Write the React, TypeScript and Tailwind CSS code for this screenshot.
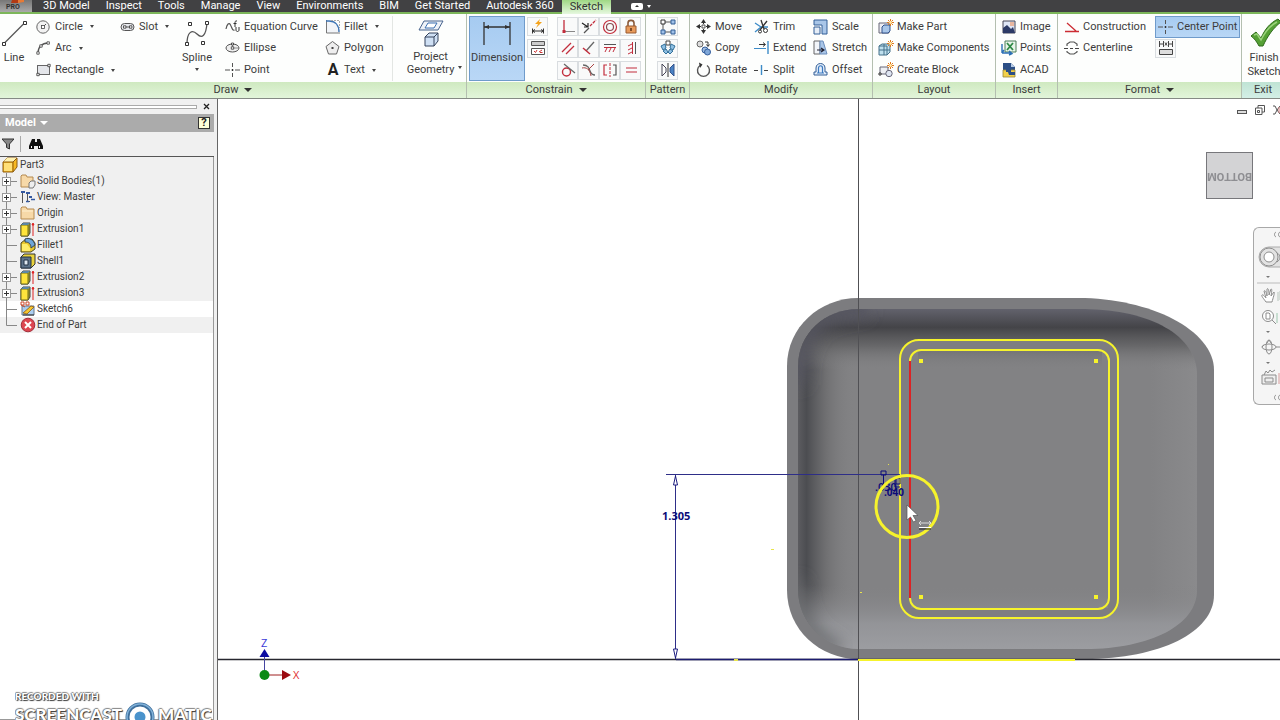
import { useState, type ReactNode } from "react";

const tabs = ["3D Model", "Inspect", "Tools", "Manage", "View", "Environments", "BIM", "Get Started", "Autodesk 360", "Sketch"];

const icons: Record<string, ReactNode> = {
  circle: (
    <>
      <circle cx="7" cy="8" r="6.2" fill="#f2f2f2" stroke="#666" />
      <path d="M7 8l3-3" stroke="#555" />
      <rect x="5.5" y="6.5" width="3" height="3" fill="#fff" stroke="#444" strokeWidth=".8" />
    </>
  ),
  arc: (
    <>
      <path d="M2 13C2 7 6 3 12 3" stroke="#555" strokeWidth="1.3" />
      <path d="M.8 11.8h2.4v2.4H.8zM3.8 4.8h2.4v2.4H3.8zM11 1.8h2.4v2.4H11z" fill="#fff" stroke="#444" strokeWidth=".8" />
    </>
  ),
  rectangle: (
    <>
      <rect x="1.5" y="3.5" width="12" height="9" fill="#e4e6ea" stroke="#666" />
      <path d="M.8 11.3h2.4v2.4H.8zM11.8 2.3h2.4v2.4h-2.4z" fill="#fff" stroke="#333" strokeWidth=".8" />
    </>
  ),
  slot: (
    <>
      <rect x="1" y="4.5" width="13" height="7" rx="3.5" fill="#e6e8ec" stroke="#555" />
      <path d="M4 8h7" stroke="#555" />
      <path d="M3.5 6.8h2.4v2.4H3.5zM9.5 6.8h2.4v2.4H9.5z" fill="#fff" stroke="#333" strokeWidth=".8" />
    </>
  ),
  equation: (
    <>
      <path d="M1 10c1-5 3-7 4.5-4s2 6 4 5" stroke="#555" strokeWidth="1.2" />
      <path d="M12 2c-2-.5-2 1-2 2v4M8.5 4.5h3M11 8v3c0 2 3 2 3 0V8" stroke="#333" />
    </>
  ),
  ellipse: (
    <>
      <ellipse cx="7.5" cy="8" rx="6.5" ry="4" fill="#eee" stroke="#555" />
      <path d="M7.5 4v4h6" stroke="#777" strokeWidth=".8" />
      <path d="M6.3 6.8h2.4v2.4H6.3zM6.5 3h2v2h-2z" fill="#fff" stroke="#333" strokeWidth=".8" />
    </>
  ),
  point: (
    <>
      <path d="M0 8h5M10 8h5M7.5 1v4M7.5 11v4" stroke="#555" />
      <path d="M7 7.5h1v1H7z" stroke="#333" />
    </>
  ),
  fillet: (
    <>
      <path d="M1 2h4c5 0 9 4 9 9v3H1z" fill="#f1f4f8" />
      <path d="M1.5 1v13H15" stroke="#777" />
      <path d="M1 2h3c6 0 10 4 10 11" stroke="#3c74b4" strokeWidth="1.4" />
      <path d="M6 1.5h8.5V9" stroke="#aaa" strokeDasharray="2 1" />
    </>
  ),
  polygon: (
    <>
      <path d="M7.5 1.5l6.5 5-2.5 7.500h-8L1 6.5z" fill="#eee" stroke="#666" />
      <path d="M6.500 7h2v2h-2z" fill="#444" />
    </>
  ),
  move: (
    <>
      <path d="M7.5 1v4M7.5 10v4M1 7.5h4M10 7.5h4" stroke="#333" />
      <path d="M5 4l2.5-4L10 4zM5 11l2.5 4 2.5-4zM4 5L0 7.500 4 10zM11 5l4 2.500L11 10z" fill="#333" />
      <path d="M6 6h3v3H6z" fill="#fff" stroke="#555" />
    </>
  ),
  copy: (
    <>
      <circle cx="4" cy="4" r="3" fill="#ddd" stroke="#666" />
      <circle cx="9" cy="10" r="3" fill="#9dbbe0" stroke="#345e9c" />
      <circle cx="11.5" cy="12" r="3" fill="#7fa7d8" stroke="#345e9c" />
      <path d="M9 2h3v4M10.5 4.5l1.5 2 1.5-2" stroke="#333" />
    </>
  ),
  rotate: (
    <>
      <path d="M4 3.5a6 6 0 1 0 7 0" stroke="#555" strokeWidth="1.4" />
      <path d="M3 .5l3.5 2L4 6z" fill="#333" />
    </>
  ),
  trim: (
    <>
      <path d="M1 4l6 4-6 5M7 8h7" stroke="#3c8bc8" strokeWidth="1.3" />
      <path d="M7 1l3 9M13 2L6 11" stroke="#333" strokeWidth="1.3" />
      <circle cx="11.5" cy="11.5" r="2" stroke="#333" />
      <circle cx="6" cy="12.5" r="1.5" stroke="#333" />
    </>
  ),
  extend: (
    <>
      <path d="M0 8.5h12" stroke="#3c8bc8" />
      <path d="M5 4.500h6M9 2.500l2.500 2L9 6.500" stroke="#333" />
      <path d="M14 1v13" stroke="#3c8bc8" strokeWidth="1.4" />
    </>
  ),
  split: (
    <>
      <path d="M0 8.5h5M10 8.5h5" stroke="#444" strokeDasharray="4 1" />
      <path d="M7.5 3v10" stroke="#3c8bc8" strokeWidth="1.4" />
    </>
  ),
  scale: (
    <>
      <path d="M1 1h13v14H9V6H1z" fill="#a9c6e8" stroke="#335f96" />
      <path d="M1 8h6v7H1z" fill="#e5edf7" stroke="#335f96" />
    </>
  ),
  stretch: (
    <>
      <path d="M1 1h6v13H1z" fill="#f2f5f9" stroke="#666" />
      <path d="M7 1h3l4 13H7z" fill="#a9c6e8" stroke="#6b8dbb" />
      <path d="M4 10h6M8 8l3 2-3 2" stroke="#223" strokeWidth="1.2" />
    </>
  ),
  offset: (
    <>
      <path d="M1 13h13v-3h-2V6c0-6-9-6-9 0v4H1z" fill="#e4eefa" stroke="#335f96" />
      <path d="M4 11h7M5.5 11V6c0-3 4-3 4 0v5" stroke="#3c7bc0" strokeWidth="1.2" />
    </>
  ),
  makePart: (
    <>
      <path d="M1 4h10v10H1z" fill="#ececf2" stroke="#667" />
      <path d="M4 8l2-2h6v6l-2 2H4z" fill="#a9c6e8" stroke="#33528c" />
      <path d="M12.5 0v7M9 3.5h7M10 1l5 5M15 1l-5 5" stroke="#e07a1c" />
      <circle cx="12.5" cy="3.5" r="1.4" fill="#ffe9a8" />
    </>
  ),
  makeComponents: (
    <>
      <path d="M1 6l3-2h8v8l-3 3H1z" fill="#bfe0ee" stroke="#44708a" />
      <path d="M1 10h11M6 4v11M1 6h8v9" stroke="#44708a" />
      <path d="M12.5 0v7M9 3.5h7M10 1l5 5M15 1l-5 5" stroke="#e07a1c" />
      <circle cx="12.5" cy="3.5" r="1.4" fill="#ffe9a8" />
    </>
  ),
  createBlock: (
    <>
      <path d="M2 5h8v7H2z" fill="#eef0f4" stroke="#667" />
      <circle cx="11" cy="11.5" r="3.2" fill="#dfe6f2" stroke="#667" />
      <path d="M1 11h2v2H1z" fill="#fff" stroke="#333" />
      <path d="M12.5 0v7M9 3.5h7M10 1l5 5M15 1l-5 5" stroke="#e07a1c" />
      <circle cx="12.5" cy="3.5" r="1.4" fill="#ffe9a8" />
    </>
  ),
  image: (
    <>
      <path d="M2 2h12v12H2z" fill="#dfe6f6" stroke="#445" />
      <path d="M2 14V9l4-3 4 4 2-2 2 6z" fill="#2c3a66" />
      <path d="M9 3h4v4H9z" fill="#e9b7a0" />
    </>
  ),
  points: (
    <>
      <path d="M4 1h11v11H4z" fill="#e9f5ea" stroke="#4a7c59" />
      <path d="M6 3l6 7M12 3l-6 7" stroke="#2f8a45" strokeWidth="1.8" />
      <path d="M1 4v9M1 13h9M3 10l-2 3M8 11l3 2.5L8 15" stroke="#2b6fb5" strokeWidth="1.4" />
    </>
  ),
  acad: (
    <>
      <path d="M2 1h8l4 4v4H2z" fill="#2c4f86" />
      <path d="M10 1l4 4h-4z" fill="#b7cbe6" />
      <path d="M2 8h12v7H2z" fill="#f3d04a" stroke="#94863a" strokeWidth=".8" />
      <path d="M5 5h5v5h4v3H8l-1-3H5z" fill="#2c4f86" />
    </>
  ),
  construction: <path d="M1 12.500h14M3 4l9 8" stroke="#cc2c34" strokeWidth="1.3" />,
  centerline: (
    <>
      <path d="M0 8.5h4M6 8.5h3M11 8.500h4" stroke="#444" />
      <path d="M3 6V4l3-2h4l3 2v2M3 11v1l3 2h4l3-2v-1" stroke="#555" strokeWidth="1.2" />
    </>
  ),
  autoDim: (
    <>
      <path d="M10 0L5 5h3l-2 4 6-6H9z" fill="#f4a31c" />
      <path d="M2 12h12M2.5 9.5v5M13.5 9.5v5M5 10.500L2.500 12 5 13.500M11 10.500l2.500 1.500-2.500 1.500" stroke="#333" />
    </>
  ),
  showDim: (
    <>
      <path d="M1.500 1.500h13v4h-13z" fill="#ccc" stroke="#555" />
      <path d="M1.500 8.500h13v6h-13z" fill="#fff" stroke="#555" />
      <path d="M4 11l1.500 1.500L7 10M9 12l3-2M10 12.500h2.500" stroke="#c33" />
    </>
  ),
  coincident: (
    <>
      <path d="M4 1v11" stroke="#c22d3c" strokeWidth="1.3" />
      <path d="M4 12.5h11" stroke="#888" />
      <path d="M2.500 11h3v3h-3z" fill="#c22d3c" />
    </>
  ),
  collinear: (
    <>
      <path d="M9 7l6-6" stroke="#c22d3c" strokeWidth="1.3" strokeDasharray="3 1" />
      <path d="M3 14l5-5" stroke="#555" strokeWidth="1.2" />
      <path d="M1 4l6 4M7 4v4H3" stroke="#222" strokeWidth="1.2" />
    </>
  ),
  concentric: (
    <>
      <circle cx="8" cy="8" r="6.5" stroke="#c22d3c" strokeWidth="1.2" />
      <circle cx="8" cy="8" r="3.5" stroke="#8a4a50" strokeWidth="1.2" />
    </>
  ),
  lock: (
    <>
      <path d="M5 7V4c0-3.5 6-3.5 6 0v3" stroke="#8a5a3a" strokeWidth="1.6" />
      <path d="M3 7h10v7H3z" fill="#e79a5b" stroke="#9a5a30" />
      <path d="M8 9v3" stroke="#5c3217" strokeWidth="1.5" />
    </>
  ),
  parallel: (
    <>
      <path d="M2 12L11 3" stroke="#c22d3c" strokeWidth="1.3" />
      <path d="M6 14l8-8" stroke="#c22d3c" strokeWidth="1.3" />
    </>
  ),
  perpendicular: (
    <>
      <path d="M5 11l8-9" stroke="#666" strokeWidth="1.3" />
      <path d="M2 8l7 6" stroke="#c22d3c" strokeWidth="1.5" />
    </>
  ),
  horizontal: (
    <>
      <path d="M2 4.5h12" stroke="#555" />
      <path d="M2 7.5h12M5 8l-2 4M9 8l-2 4M13 8l-2 4" stroke="#c22d3c" />
    </>
  ),
  vertical: (
    <>
      <path d="M12.5 2v12" stroke="#555" />
      <path d="M9.5 2v12M9 4L5 6M9 8l-4 2M9 12l-4 2" stroke="#c22d3c" />
    </>
  ),
  tangent: (
    <>
      <circle cx="6.500" cy="10" r="4" stroke="#c22d3c" strokeWidth="1.4" />
      <path d="M4 2l11 9" stroke="#666" strokeWidth="1.2" />
    </>
  ),
  smooth: (
    <>
      <path d="M2 3c5 0 6 3 7 6s3 4 5 4" stroke="#666" strokeWidth="1.4" />
      <path d="M1 6c4-1 8 1 9 8M13 2L7 8" stroke="#a44" />
    </>
  ),
  symmetric: (
    <>
      <path d="M5 3H2v10h3" stroke="#c22d3c" strokeWidth="1.2" />
      <path d="M11 3h3v10h-3" stroke="#555" strokeWidth="1.2" />
      <path d="M8 1v14" stroke="#c22d3c" strokeDasharray="3 1" />
    </>
  ),
  equal: <path d="M3 6h11M3 10h11" stroke="#c22d3c" strokeWidth="1.2" />,
  patternRect: (
    <>
      <path d="M3 3h10M3 3v10h10" stroke="#555" />
      <path d="M1 1h4v4H1z" fill="#fff" stroke="#333" />
      <path d="M11 1h4v4h-4zM1 11h4v4H1zM11 11h4v4h-4z" fill="#9fc0e8" stroke="#335f96" />
    </>
  ),
  patternCirc: (
    <>
      <path d="M6 1h4v4H6z" fill="#fff" stroke="#444" />
      <path d="M1 6l4-2 1 4-3 2zM11 4l4 2-2 4-3-2zM3 11l3-2 2 3-2 2zM10 9l3 2-3 3-2-2z" fill="#8fc0e4" stroke="#33709a" />
    </>
  ),
  mirror: (
    <>
      <path d="M2 2l4 4v4l-4 4z" fill="#fff" stroke="#445" />
      <path d="M14 2l-4 4v4l4 4z" fill="#4a83c4" stroke="#33528c" />
      <path d="M8 1v14" stroke="#333" />
    </>
  ),
  driven: (
    <>
      <path d="M1.500 1v6M5.500 1v6M2 4h3M10.500 1v6M14.500 1v6M11 4h3M7 2.500l2 3M9 2.500l-2 3" stroke="#444" />
      <path d="M1.500 9.500h13v5h-13z" fill="#ddd" stroke="#444" />
    </>
  ),
  cube: (
    <>
      <path d="M1 5l4-4h10v9l-4 5H1z" fill="#f7b921" stroke="#8c5b11" />
      <path d="M1 5l4-4h10l-4 4z" fill="#fff2b0" />
      <path d="M2 6h8v8H2z" fill="#ffe078" />
      <path d="M1 5h10v10M11 5l4-4" stroke="#8c5b11" />
    </>
  ),
  bodies: (
    <>
      <path d="M1 3l1-1h4l1 2h6v10H1z" fill="#f7d9a8" stroke="#b58a50" />
      <path d="M9 10l2-2h4v4l-2 3H9z" fill="#eee" stroke="#777" />
    </>
  ),
  folder: (
    <>
      <path d="M1 3l1-1h4l1 2h7v10H1z" fill="#f7d9a8" stroke="#b58a50" />
      <path d="M2 6h11" stroke="#fff0d0" />
    </>
  ),
  viewMaster: (
    <>
      <path d="M2.500 2v12M7.500 5v8M7 12.500h3" stroke="#555" />
      <path d="M1 2h4v2H1zM6 3h4v2H6zM9 7h3v2H9z" fill="#3458a0" />
      <path d="M6 12.500h3M11 10.500h4" stroke="#3458a0" strokeWidth="1.5" />
    </>
  ),
  extrusion: (
    <>
      <path d="M1 4l2-2h7v10l-2 3H1z" fill="#a9a227" stroke="#444" />
      <path d="M1 4h7v11H1z" fill="#ffe43c" stroke="#6f6a1c" />
      <path d="M3 2h7L8 4H1z" fill="#5b87a6" />
      <path d="M13 15V3M12 4l1-2 1 2z" fill="#d22" stroke="#d22" />
    </>
  ),
  filletPart: (
    <>
      <path d="M1 6l5-4h6l3 4v6l-4 3H1z" fill="#e9c82c" stroke="#4c4a20" />
      <path d="M5 2c4-2 9 1 10 6l-4 3c0-4-2-6-6-6z" fill="#6ea6d8" stroke="#345" />
      <path d="M2 7h5l3 4v3H2z" fill="#ffee6a" />
    </>
  ),
  shell: (
    <>
      <path d="M1 4l3-3h11v10l-4 4H1z" fill="#e9d23c" stroke="#333" />
      <path d="M1 4h10v11H1z" fill="#5d7389" stroke="#234" />
      <path d="M4 7h4v5H4z" fill="#dfe8f0" stroke="#234" />
    </>
  ),
  sketchDoc: (
    <>
      <path d="M2 5h12v9H2z" fill="#a9cdf0" stroke="#678" />
      <path d="M3 12l8-7 3 1-7 7z" fill="#f6c62e" stroke="#8c5b11" strokeWidth=".8" />
      <path d="M1 1h3v3H1zM6 1h3v3H6zM1 4l4 2" fill="#fff" stroke="#cc4a2a" />
      <path d="M3 14h11" stroke="#333" />
    </>
  ),
  end: (
    <>
      <circle cx="8" cy="8" r="6.8" fill="#dc4650" stroke="#a3303c" />
      <path d="M5 5l6 6M11 5l-6 6" stroke="#fff" strokeWidth="2" />
    </>
  ),
};

function Icon({ name }: { name: string }) {
  return (
    <svg className="size-4 shrink-0" viewBox="0 0 16 16" fill="none">
      {icons[name]}
    </svg>
  );
}

function Caret() {
  return <span className="border-x-2 border-t-3 border-x-transparent border-t-[#444]" />;
}

function Tool({ icon, label, menu }: { icon: string; label: string; menu?: boolean }) {
  return (
    <button className="flex items-center gap-[3px] whitespace-nowrap px-1 text-left">
      <Icon name={icon} />
      {label}
      {menu && <span className="ml-1 flex"><Caret /></span>}
    </button>
  );
}

function SmallTool({ icon }: { icon: string }) {
  return (
    <button aria-label={icon} className="flex h-[19px] w-[21px] items-center justify-center self-center border border-[#d9dde0] bg-[#f9fafa]">
      <Icon name={icon} />
    </button>
  );
}

function Panel({ title, menu, className, children }: { title: string; menu?: boolean; className?: string; children: ReactNode }) {
  return (
    <section className={`flex shrink-0 flex-col border-r border-[#b4bfb0] ${className ?? ""}`}>
      <div className="flex h-[68px] bg-[#fdfefd] pt-0.5 pb-px">{children}</div>
      <div className="flex h-4 items-center justify-center gap-1.5 bg-linear-to-b from-[#cfe9c0] to-[#e2f5da]">
        {title}
        {menu && <span className="border-x-4 border-t-4 border-x-transparent border-t-[#333]" />}
      </div>
    </section>
  );
}

const column = "grid grid-rows-3";

function Ribbon() {
  return (
    <div className="flex shrink-0 overflow-hidden border-b border-[#858a85] bg-[#fdfefd]">
      <Panel title="Draw" menu className="w-[467px]">
        <button className="flex w-8 flex-col items-center gap-0.5 pt-1 pr-1">
          <svg className="h-7 w-7" viewBox="0 0 28 28" fill="none">
            <path d="M4 23.500L25 2.500" stroke="#555" strokeWidth="1.2" />
            <path d="M2.500 22.500h3v3h-3zM23.500 1.500h3v3h-3z" fill="#fff" stroke="#333" />
          </svg>
          Line
        </button>
        <div className={`${column} w-[84px]`}>
          <Tool icon="circle" label="Circle" menu />
          <Tool icon="arc" label="Arc" menu />
          <Tool icon="rectangle" label="Rectangle" menu />
        </div>
        <div className={`${column} w-[57px]`}>
          <Tool icon="slot" label="Slot" menu />
        </div>
        <button className="flex w-12 flex-col items-center gap-0.5 pt-1">
          <svg className="h-7 w-7 shrink-0" viewBox="0 0 28 28" fill="none">
            <path d="M4 24C4 12 9 9 14 14s9 2 10-11" stroke="#555" strokeWidth="1.3" />
            <path d="M2.500 22.500h3v3h-3zM5.500 2.500h3v3h-3zM18.500 21.500h3v3h-3zM22.500 1.500h3v3h-3z" fill="#fff" stroke="#333" />
          </svg>
          Spline
          <Caret />
        </button>
        <div className={`${column} w-[100px]`}>
          <Tool icon="equation" label="Equation Curve" />
          <Tool icon="ellipse" label="Ellipse" />
          <Tool icon="point" label="Point" />
        </div>
        <div className={`${column} w-[72px] border-r border-[#e3e6e3]`}>
          <Tool icon="fillet" label="Fillet" menu />
          <Tool icon="polygon" label="Polygon" />
          <button className="flex items-center gap-[3px] px-1">
            <span className="w-4 text-center text-base leading-4 font-bold text-[#222]">A</span>
            Text
            <span className="ml-1 flex"><Caret /></span>
          </button>
        </div>
        <button className="relative flex flex-1 flex-col items-center pt-1 pl-0.5 leading-[13px]">
          <svg className="-mb-0.5 h-8 w-8 shrink-0" viewBox="0 0 32 32" fill="none">
            <path d="M9 1h19l-5 9H4z" fill="#eef2f8" stroke="#46628c" />
            <path d="M13 3h9l-3 5h-9z" fill="#fff" stroke="#3a6fb0" />
            <path d="M10 17l4-4h9v8l-4 5h-9z" fill="#cfe0f4" stroke="#34435c" />
            <path d="M10 17h9v9M19 17l4-4" stroke="#34435c" />
          </svg>
          <span>Project</span>
          <span>Geometry</span>
          <span className="absolute right-1 bottom-3 flex"><Caret /></span>
        </button>
      </Panel>

      <Panel title="Constrain" menu className="w-[179px]">
        <button className="ml-0.5 flex w-14 flex-col items-center gap-0.5 border border-[#6f9bcb] bg-linear-to-b from-[#a6cbf1] to-[#b9d7f6] pt-[3px]">
          <svg className="h-7 w-8" viewBox="0 0 32 28" fill="none">
            <path d="M3 2v23M29 2v23M3 7h26" stroke="#333" strokeWidth="1.3" />
            <path d="M3 7l5-2v4zM29 7l-5-2v4z" fill="#333" />
          </svg>
          Dimension
        </button>
        <div className={`${column} ml-0.5`}>
          <SmallTool icon="autoDim" />
          <SmallTool icon="showDim" />
        </div>
        <div className="ml-[9px] grid grid-cols-4 grid-rows-3">
          <SmallTool icon="coincident" />
          <SmallTool icon="collinear" />
          <SmallTool icon="concentric" />
          <SmallTool icon="lock" />
          <SmallTool icon="parallel" />
          <SmallTool icon="perpendicular" />
          <SmallTool icon="horizontal" />
          <SmallTool icon="vertical" />
          <SmallTool icon="tangent" />
          <SmallTool icon="smooth" />
          <SmallTool icon="symmetric" />
          <SmallTool icon="equal" />
        </div>
      </Panel>

      <Panel title="Pattern" className="w-11">
        <div className={`${column} mx-auto`}>
          <SmallTool icon="patternRect" />
          <SmallTool icon="patternCirc" />
          <SmallTool icon="mirror" />
        </div>
      </Panel>

      <Panel title="Modify" className="w-[183px]">
        <div className={`${column} ml-0.5 w-[58px]`}>
          <Tool icon="move" label="Move" />
          <Tool icon="copy" label="Copy" />
          <Tool icon="rotate" label="Rotate" />
        </div>
        <div className={`${column} w-[59px]`}>
          <Tool icon="trim" label="Trim" />
          <Tool icon="extend" label="Extend" />
          <Tool icon="split" label="Split" />
        </div>
        <div className={column}>
          <Tool icon="scale" label="Scale" />
          <Tool icon="stretch" label="Stretch" />
          <Tool icon="offset" label="Offset" />
        </div>
      </Panel>

      <Panel title="Layout" className="w-[123px]">
        <div className={`${column} ml-px`}>
          <Tool icon="makePart" label="Make Part" />
          <Tool icon="makeComponents" label="Make Components" />
          <Tool icon="createBlock" label="Create Block" />
        </div>
      </Panel>

      <Panel title="Insert" className="w-[62px]">
        <div className={`${column} ml-px`}>
          <Tool icon="image" label="Image" />
          <Tool icon="points" label="Points" />
          <Tool icon="acad" label="ACAD" />
        </div>
      </Panel>

      <Panel title="Format" menu className="w-[184px]">
        <div className={`${column} ml-0.5 w-[94px]`}>
          <Tool icon="construction" label="Construction" />
          <Tool icon="centerline" label="Centerline" />
        </div>
        <div className={column}>
          <button className="ml-px flex items-center gap-[3px] border border-[#6f9bcb] bg-linear-to-b from-[#a6cbf1] to-[#b9d7f6] px-0.5 whitespace-nowrap">
            <Icon name="point" />
            Center Point
          </button>
          <div className="ml-px flex">
            <SmallTool icon="driven" />
          </div>
        </div>
      </Panel>

      <section className="flex min-w-0 flex-1 flex-col overflow-hidden">
        <button className="flex h-[68px] w-11 flex-col items-center gap-px bg-[#fdfefd] pt-1 leading-[13px]">
          <svg className="h-8 w-9 shrink-0" viewBox="0 0 36 32" fill="none">
            <path d="M5 18l5-4 5 6C19 11 24 5 32 1l3 3C27 10 21 19 17 28h-4C11 24 8 20 5 18z" fill="#55a035" stroke="#2f6a1c" />
            <path d="M8 17l3-1 4 6C20 12 25 7 31 4" stroke="#9bd27c" strokeWidth="1.5" />
          </svg>
          <span>Finish</span>
          <span>Sketch</span>
        </button>
        <div className="flex h-4 items-center bg-linear-to-b from-[#bfe3d4] to-[#d3efe6] pl-3">Exit</div>
      </section>
    </div>
  );
}

function TabBar() {
  const [active, setActive] = useState("Sketch");
  return (
    <nav className="flex h-3.5 shrink-0 items-stretch border-b-2 border-[#7cb65a] bg-[#414143] text-white">
      <div className="relative mr-[3px] flex w-8 items-end overflow-hidden bg-linear-to-b from-[#777] to-[#aaa] pl-[6px] text-[7px] leading-[9px] font-bold text-[#333]">
        <svg className="absolute top-0 left-2.5 h-1 w-4" viewBox="0 0 16 4">
          <path d="M2 0h6v3H1z" fill="#b23a14" />
          <path d="M8 0h6v2l-6 1z" fill="#e77a35" />
        </svg>
        PRO
      </div>
      {tabs.map((tab) => (
        <button
          key={tab}
          onClick={() => setActive(tab)}
          className={
            tab === active
              ? "-mb-0.5 bg-linear-to-b from-[#9fd884] to-[#e6f8df] px-2 leading-3 text-[#333]"
              : "px-2 leading-3"
          }
        >
          {tab}
        </button>
      ))}
      <button aria-label="Ribbon display" className="ml-5 flex items-center gap-1">
        <span className="flex h-[7px] w-3 items-center justify-center rounded-xs bg-white">
          <span className="border-x-2 border-b-2 border-x-transparent border-b-[#333]" />
        </span>
        <span className="border-x-2 border-t-3 border-x-transparent border-t-white" />
      </button>
    </nav>
  );
}

const nodes = [
  { icon: "bodies", label: "Solid Bodies(1)", expandable: true },
  { icon: "viewMaster", label: "View: Master", expandable: true },
  { icon: "folder", label: "Origin", expandable: true },
  { icon: "extrusion", label: "Extrusion1", expandable: true },
  { icon: "filletPart", label: "Fillet1" },
  { icon: "shell", label: "Shell1" },
  { icon: "extrusion", label: "Extrusion2", expandable: true },
  { icon: "extrusion", label: "Extrusion3", expandable: true },
  { icon: "sketchDoc", label: "Sketch6", selected: true },
  { icon: "end", label: "End of Part" },
];

function ModelTree() {
  return (
    <aside className="flex w-[218px] shrink-0 flex-col border-r border-[#666] bg-[#f0f0f0] pr-[3px]">
      <div className="flex h-[15px] items-center gap-1 pr-0.5">
        <span className="h-[4px] flex-1 border-y border-r border-[#aaa] bg-white" />
        <button aria-label="Close" className="flex p-0.5">
          <svg className="size-[7px]" viewBox="0 0 7 7">
            <path d="M1 1l5 5M6 1L1 6" stroke="#222" strokeWidth="1.3" />
          </svg>
        </button>
      </div>
      <div className="flex h-[18px] items-center bg-[#ababab] pr-1 pl-[5px] text-[11px] font-bold text-white">
        Model
        <span className="ml-1 border-x-4 border-t-4 border-x-transparent border-t-white" />
        <button className="ml-auto flex h-3 w-3 items-center justify-center border border-[#333] bg-[#ffffd8] text-[#222]">?</button>
      </div>
      <div className="flex h-[25px] items-center border-b border-[#555] pl-[2px]">
        <button aria-label="Filter">
          <svg className="size-3" viewBox="0 0 12 12">
            <path d="M0 1h12L7.500 6v5l-3-1.500V6z" fill="#888" stroke="#333" />
          </svg>
        </button>
        <span className="mx-[6px] h-4 border-l border-[#aaa]" />
        <button aria-label="Find" className="ml-0.5">
          <svg className="h-3.5 w-3.5" viewBox="0 0 14 14">
            <path d="M3 2h3v3h2V2h3l3 7v3H9V9H5v3H0V9z" fill="#111" />
            <path d="M2 9h1v2H2zM10 9h1v2h-1z" fill="#fff" />
          </svg>
        </button>
      </div>
      <div className="flex-1 border-r border-b border-[#999] bg-white text-[10px]">
        <div className="flex h-4 items-center gap-0.5 bg-[#f0f0f0] pl-[2px]">
          <Icon name="cube" />
          Part3
        </div>
        <ul>
          {nodes.map((node, i) => (
            <li key={node.label} className={`flex h-4 items-center ${node.selected ? "bg-white" : "bg-[#f0f0f0]"}`}>
              <svg className="h-4 w-5 shrink-0" viewBox="0 0 20 16" fill="none">
                <path d={i === nodes.length - 1 ? "M6.5 0v8.5H17" : "M6.5 0v16M6.5 8.5H17"} stroke="#888" />
                {node.expandable && (
                  <>
                    <rect x="2.5" y="4.5" width="8" height="8" fill="#fff" stroke="#999" />
                    <path d="M4 8.5h5M6.5 6v5" stroke="#333" />
                  </>
                )}
              </svg>
              <button className="flex items-center gap-px">
                <Icon name={node.icon} />
                {node.label}
              </button>
            </li>
          ))}
        </ul>
      </div>
    </aside>
  );
}

const inner = "M858 309H1085C1150 310 1197 335 1197 375V590C1197 625 1150 649 1085 649H858C825 649 798 622 798 590V366C798 334 825 309 858 309Z";

function Drawing() {
  return (
    <svg className="block h-full w-full" viewBox="218 99 1062 621" preserveAspectRatio="xMidYMid slice" fill="none">
      <defs>
        <linearGradient id="top" x1="0" y1="309" x2="0" y2="370" gradientUnits="userSpaceOnUse">
          <stop offset="0" stopColor="#62626c" />
          <stop offset=".3" stopColor="#444448" />
          <stop offset=".6" stopColor="#606062" stopOpacity=".8" />
          <stop offset="1" stopColor="#828284" stopOpacity="0" />
        </linearGradient>
        <linearGradient id="left" x1="798" y1="0" x2="855" y2="0" gradientUnits="userSpaceOnUse">
          <stop offset="0" stopColor="#5c5c60" />
          <stop offset=".15" stopColor="#4c4d51" />
          <stop offset=".5" stopColor="#6c6c6e" stopOpacity=".8" />
          <stop offset="1" stopColor="#828284" stopOpacity="0" />
        </linearGradient>
        <linearGradient id="right" x1="1150" y1="0" x2="1197" y2="0" gradientUnits="userSpaceOnUse">
          <stop offset="0" stopColor="#8a8a8c" stopOpacity="0" />
          <stop offset="1" stopColor="#8a8a8c" />
        </linearGradient>
        <linearGradient id="bottom" x1="0" y1="585" x2="0" y2="649" gradientUnits="userSpaceOnUse">
          <stop offset="0" stopColor="#828284" stopOpacity="0" />
          <stop offset=".6" stopColor="#95969a" stopOpacity=".9" />
          <stop offset="1" stopColor="#9c9da1" />
        </linearGradient>
        <filter id="soft" x="-30%" y="-30%" width="160%" height="160%">
          <feGaussianBlur stdDeviation="8" />
        </filter>
        <clipPath id="pocket">
          <path d={inner} />
        </clipPath>
      </defs>

      <path d="M858 298H1078C1150 298 1214 330 1214 370V595C1214 632 1160 659 1085 659H858C820 659 787 630 787 590V366C787 327 820 298 858 298Z" fill="#7c7c7f" />
      <g clipPath="url(#pocket)">
        <path d={inner} fill="#828284" />
        <path d="M1150 309h47v340h-47z" fill="url(#right)" />
        <path d="M798 309h60v340h-60z" fill="url(#left)" />
        <path d="M798 309h399v61H798z" fill="url(#top)" />
        <path d="M798 585h399v64H798z" fill="url(#bottom)" />
        <path d="M796 385C796 332 815 307 868 307" stroke="#55545f" strokeWidth="20" filter="url(#soft)" />
        <path d="M798 580C798 620 815 640 840 649" stroke="#66676b" strokeWidth="12" filter="url(#soft)" />
      </g>

      <rect x="900" y="340" width="218" height="278" rx="19" fill="#7e7d81" />
      <rect x="910" y="350" width="199" height="259" rx="11" fill="#828284" />
      <path d="M911 580h197v28H911z" fill="url(#bottom)" />
      <path d="M918 351h184v19H918z" fill="url(#top)" opacity=".8" />
      <rect x="900" y="340" width="218" height="278" rx="19" stroke="#f6f32c" strokeWidth="2" />
      <rect x="910" y="350" width="199" height="259" rx="11" stroke="#f6f32c" strokeWidth="2" />
      <path d="M910 361v237" stroke="#dd2224" strokeWidth="2" />
      <path d="M919 359h4v4h-4zM1094 359h4v4h-4zM919 595h4v4h-4zM1094 595h4v4h-4z" fill="#f6f32c" />

      <path d="M858.5 99v621" stroke="#505054" />
      <path d="M218 659.5h1062" stroke="#26262e" strokeWidth="1.5" />
      <path d="M676 659.5h182" stroke="#1c1c70" strokeWidth="1.5" />
      <path d="M858 660h217" stroke="#f6f32c" strokeWidth="2" />
      <path d="M734 659h4v2h-4zM771 549h3v1h-3zM888 464h1v1h-1zM860 592h2v1h-2z" fill="#e8e44c" />

      <path d="M666 474.5h234M675.5 475v184" stroke="#2e2e88" />
      <path d="M675.5 476l-2 9h4zM675.5 658l-2-9h4z" fill="#fff" stroke="#1c1c80" />
      <g fill="#0b0b78" fontFamily="'Open Sans', sans-serif" fontWeight="bold" fontSize="11">
        <text x="662" y="520">1.305</text>
        <text x="875" y="491" fontWeight="600">.030</text>
        <text x="884" y="496" fontSize="10">.040</text>
      </g>
      <path d="M881 471h5v4h-5zM883.5 475v12M895 477v10h5M896 478h4v6h-4z" stroke="#0b0b78" />
      <circle cx="907" cy="506.5" r="31" stroke="#f6f32c" strokeWidth="3" />
      <path d="M907 505v15l3.500-3 3 5 2.500-1.500-3-5h5z" fill="#fff" stroke="#555" strokeWidth=".7" />
      <path d="M919 523h12M921 521l-2 2 2 2M929 521l2 2-2 2" stroke="#ddd" />
      <path d="M919 527.5h12" stroke="#fff" />
      <path d="M919 529h12" stroke="#222" />

      <path d="M264.5 675v-18" stroke="#4545a0" />
      <path d="M265 675h20" stroke="#a02020" />
      <path d="M264.5 649l5 8h-10z" fill="#0c0ca0" />
      <path d="M282 670l9 5-9 5z" fill="#9c0c12" />
      <circle cx="264.5" cy="675" r="5" fill="#0b8a14" />
      <g fontFamily="'Open Sans', sans-serif" fontSize="11">
        <text x="261" y="647" fill="#3c3cd8">Z</text>
        <text x="293" y="679" fill="#e03030">X</text>
      </g>
    </svg>
  );
}

function NavBar() {
  return (
    <div className="absolute top-32 right-0 w-[27px] overflow-hidden rounded-l-md border border-r-0 border-[#a8a8a8] bg-[#f5f5f5]">
      <svg className="h-44 w-[27px]" viewBox="0 0 27 176" fill="none" stroke="#8c8c8c">
        <path d="M22 4c-2 1-2 4 0 5M26 4c-2 1-2 4 0 5M22 167c-2 1-2 4 0 5M26 167c-2 1-2 4 0 5" />
        <path d="M30 19H15a10 10 0 0 0 0 20h15" fill="#e2e2e2" stroke="#aaa" />
        <circle cx="15" cy="29" r="9" />
        <circle cx="15" cy="29" r="5" fill="#fff" />
        <path d="M23 25c4 2 4 6 0 9" />
        <path d="M12 48h4l-2 2zM12 103h4l-2 2zM12 134h4l-2 2z" fill="#777" stroke="none" />
        <path d="M3 55h24" stroke="#bbb" />
        <path d="M12 74c-2-3-5-6-4-7s3 2 4 3l-2-7c1-1 2 0 3 5v-7c1-1 2 0 2 6l2-6c1 0 1 1 0 7l3-4c1 1-1 6-2 10h-6z" fill="#fff" />
        <path d="M24 64v9M26 63v9" stroke="#b7c4bb" />
        <circle cx="14" cy="88" r="5.5" fill="#fff" />
        <path d="M12 85h3l1 1v5h-4zM18 92l4 4" />
        <path d="M23 85v10" stroke="#9cc7ae" />
        <ellipse cx="15" cy="119" rx="7" ry="3" />
        <ellipse cx="15" cy="119" rx="3" ry="7" />
        <path d="M8 119l2-2M22 119h5M13 115l2-3 2 3" />
        <path d="M8 147h14v9H8zM11 150h8v4h-8zM10 147l2-4 2 2 2-3 2 2 3-2" fill="#eee" />
        <path d="M25 145v11" stroke="#d69a9a" />
      </svg>
    </div>
  );
}

function Viewport() {
  return (
    <main className="relative min-w-0 flex-1 overflow-hidden bg-white">
      <Drawing />
      <div className="absolute top-1.5 right-0 flex items-center gap-2">
        <button aria-label="Minimize" className="mt-1 h-1 w-2.5 border border-[#555] bg-[#ddd]" />
        <button aria-label="Restore">
          <svg className="size-2.5" viewBox="0 0 10 10" fill="#fff" stroke="#555">
            <path d="M3 .5h6.500v6.500H3z" />
            <path d="M.5 3h6.500v6.500H.5zM2.500 5.500h2v2h-2z" />
          </svg>
        </button>
        <button aria-label="Close window">
          <svg className="h-2.5 w-[7px]" viewBox="0 0 7 10" fill="none">
            <path d="M0 1h2l2 4-2 4H0M7 1L4 5l3 4" stroke="#555" />
            <path d="M6 2v6" stroke="#c77" />
          </svg>
        </button>
      </div>
      <button className="absolute top-[53px] right-[27px] flex h-[47px] w-[47px] items-center justify-center border border-[#77777b] bg-[#d3d3d5] text-[11px] font-bold text-[#8e8e92]">
        <span className="rotate-180">BOTTOM</span>
      </button>
      <NavBar />
    </main>
  );
}

function Watermark() {
  return (
    <div className="pointer-events-none absolute bottom-0 left-[15px] h-8 overflow-hidden font-['Lato'] font-black text-white [text-shadow:1px_1px_1px_#333,-1px_0_1px_#777,0_-1px_1px_#888]">
      <div className="text-[10px] leading-4">RECORDED WITH</div>
      <div className="flex gap-0.5 text-[17px] leading-[22px]">
        SCREENCAST
        <svg className="-mt-[3px] h-8 w-8 shrink-0" viewBox="0 0 32 32" fill="none">
          <circle cx="16" cy="16" r="12.5" fill="#fff" stroke="#3f6f9c" strokeWidth="4" />
          <circle cx="16" cy="16" r="13" stroke="#7fb0d8" strokeWidth="1.5" />
          <circle cx="16" cy="16" r="5.5" fill="#4a93cc" />
        </svg>
        MATIC
      </div>
    </div>
  );
}

export default function App() {
  return (
    <div className="relative flex h-screen flex-col overflow-hidden bg-white font-['Roboto',sans-serif] text-[11px] leading-4 text-[#3c3c3c]">
      <TabBar />
      <Ribbon />
      <div className="flex min-h-0 flex-1">
        <ModelTree />
        <Viewport />
      </div>
      <Watermark />
    </div>
  );
}
